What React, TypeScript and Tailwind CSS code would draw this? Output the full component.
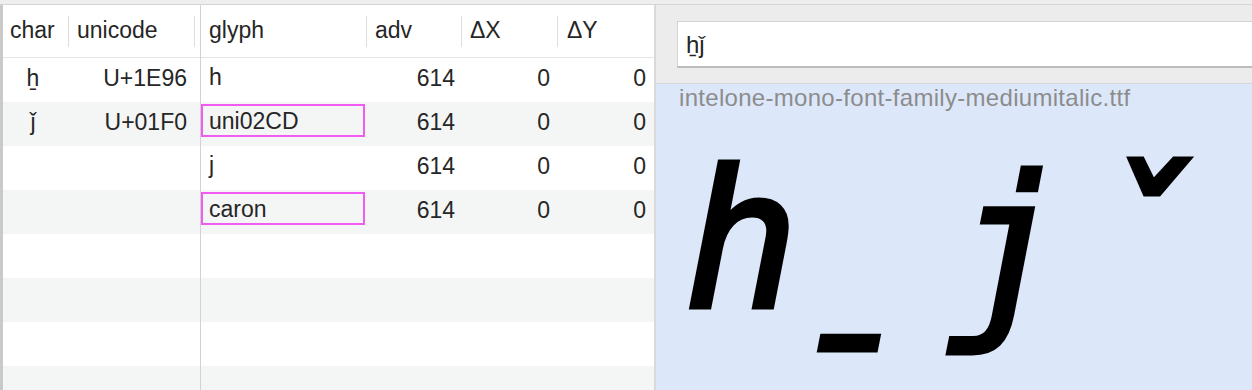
import React from "react";

const charRows = [
  { ch: "ẖ", code: "U+1E96" },
  { ch: "ǰ", code: "U+01F0" },
  null,
  null,
  null,
  null,
  null,
  null,
];

const glyphRows = [
  { name: "h", adv: 614, dx: 0, dy: 0, mark: false },
  { name: "uni02CD", adv: 614, dx: 0, dy: 0, mark: true },
  { name: "j", adv: 614, dx: 0, dy: 0, mark: false },
  { name: "caron", adv: 614, dx: 0, dy: 0, mark: true },
  null,
  null,
  null,
  null,
];

function Sep() {
  return <div className="w-px h-[31px] bg-[#dedede] shrink-0" />;
}

function rowBg(i: number) {
  return i % 2 === 1 ? "bg-[#f4f5f5]" : "bg-white";
}

/** char / unicode table on the far left */
function CharTable() {
  return (
    <div className="w-[197px] shrink-0 flex flex-col">
      <div className="h-[53px] shrink-0 flex border-b border-[#e4e4e4]">
        <div className="w-[66px] flex items-center justify-between pl-[7px]">
          <span className="mb-[1px]">char</span>
          <Sep />
        </div>
        <div className="w-[126px] flex items-center justify-between pl-[8px]">
          <span className="mb-[1px]">unicode</span>
          <Sep />
        </div>
      </div>
      {charRows.map((r, i) => (
        <div key={i} className={`h-[44px] shrink-0 flex ${rowBg(i)}`}>
          <div className="w-[66px] flex items-center justify-center pr-[6px] pb-1">{r?.ch}</div>
          <div className="w-[126px] flex items-center justify-end pr-[8px] pb-1">{r?.code}</div>
        </div>
      ))}
    </div>
  );
}

/** glyph / adv / ΔX / ΔY table */
function GlyphTable() {
  return (
    <div className="w-[453px] shrink-0 flex flex-col">
      <div className="h-[53px] shrink-0 flex border-b border-[#e4e4e4]">
        <div className="w-[166px] flex items-center justify-between pl-[8px]">
          <span className="mb-[1px]">glyph</span>
          <Sep />
        </div>
        <div className="w-[95px] flex items-center justify-between pl-[8px]">
          <span className="mb-[1px]">adv</span>
          <Sep />
        </div>
        <div className="w-[96px] flex items-center justify-between pl-[8px]">
          <span className="mb-[1px]">ΔX</span>
          <Sep />
        </div>
        <div className="w-[96px] flex items-center pl-[9px]">
          <span className="mb-[1px]">ΔY</span>
        </div>
      </div>
      {glyphRows.map((r, i) => (
        <div key={i} className={`h-[44px] shrink-0 flex ${rowBg(i)}`}>
          <div className="w-[166px] shrink-0">
            {r && (
              <div
                className={`mt-[2px] h-[33px] w-[164px] border-2 pt-[4px] pl-[6px] leading-[23px] ${
                  r.mark ? "border-[#ef5cef]" : "border-transparent"
                }`}
              >
                {r.name}
              </div>
            )}
          </div>
          <div className="w-[95px] flex items-center justify-end pr-[7px] pb-1">{r?.adv}</div>
          <div className="w-[96px] flex items-center justify-end pr-[8px] pb-1">{r?.dx}</div>
          <div className="w-[96px] flex items-center justify-end pr-[8px] pb-1">{r?.dy}</div>
        </div>
      ))}
    </div>
  );
}

/** text input + big glyph preview */
function Preview() {
  return (
    <div className="flex-1 min-w-0 overflow-hidden flex flex-col bg-[#ececec]">
      <div className="h-[79px] shrink-0 pt-[16px] pl-[21px] border-b border-[#d6d6d6]">
        <div className="w-[620px] h-[47px] bg-white border border-[#d3d3d3] border-b-2 border-b-[#bcbcbc] flex items-center pl-[8px] text-[24px]">
          ẖǰ
        </div>
      </div>
      <div className="flex-1 bg-[#dce8fa] flex flex-col">
        <div className="pt-[2px] pl-[23px] text-[24px] leading-[24px] tracking-[0.3px] text-[#8c8c8c]">
          intelone-mono-font-family-mediumitalic.ttf
        </div>
        {/* glyph run, one cell per glyph (adv 614) */}
        <div className="mt-[36px] pl-[28px] font-['DejaVu_Sans_Mono',monospace] italic text-[191px] leading-[191px] tracking-[23px] text-black whitespace-nowrap [-webkit-text-stroke:5px_black]">
          <span className="tracking-[11px]">h</span>
          <span className="align-[-10px]">ˍ</span>
          <span className="align-[-6px]">j</span>
          <span className="align-[-5px]">ˇ</span>
        </div>
      </div>
    </div>
  );
}

export default function App() {
  return (
    <div className="w-[1252px] h-[390px] overflow-hidden bg-white flex flex-col font-['Liberation_Sans','DejaVu_Sans',sans-serif] text-[23px] leading-[23px] text-[#262626]">
      <div className="h-[5px] shrink-0 bg-[#eeeeee] border-b border-[#d4d4d4]" />
      <div className="flex flex-1 min-h-0">
        <div className="w-[3px] shrink-0 bg-[#c9c9c9]" />
        <CharTable />
        <div className="w-px shrink-0 bg-[#d2d2d2]" />
        <GlyphTable />
        <div className="w-[2px] shrink-0 bg-[#d9d9d9]" />
        <Preview />
      </div>
    </div>
  );
}
